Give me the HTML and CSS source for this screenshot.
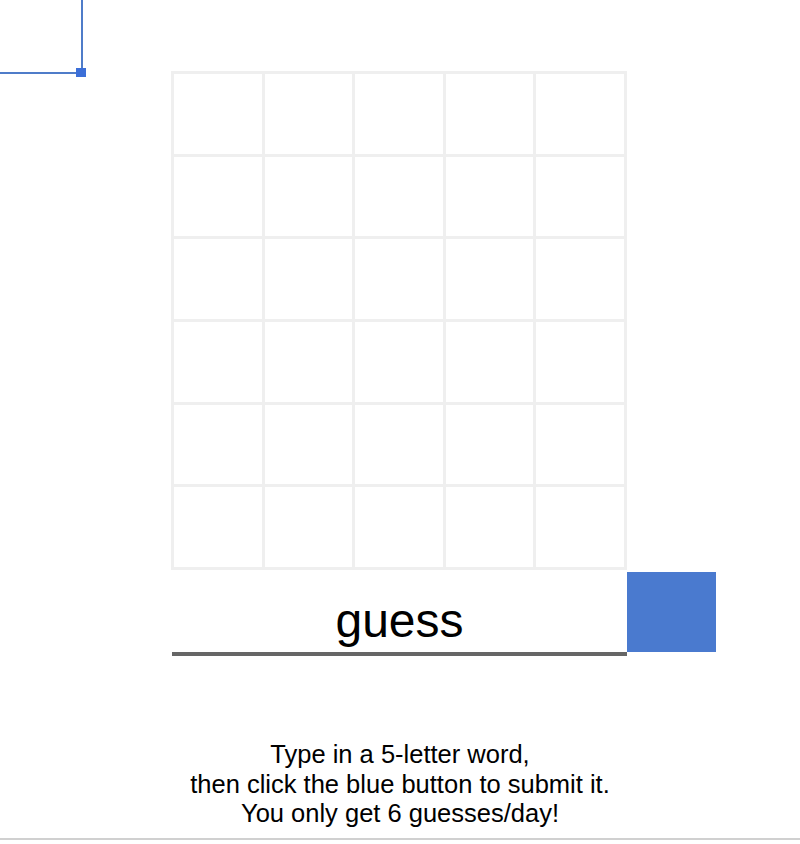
FILE: index.html
```html
<!DOCTYPE html>
<html>
<head>
<meta charset="utf-8">
<link rel="stylesheet" href="styles.css">
</head>
<body>
<div class="handle">
  <div class="handle-v"></div>
  <div class="handle-h"></div>
  <div class="handle-dot"></div>
</div>
<main class="page">
  <div class="game">
    <div class="board">
      <div class="cell"></div><div class="cell"></div><div class="cell"></div><div class="cell"></div><div class="cell"></div>
      <div class="cell"></div><div class="cell"></div><div class="cell"></div><div class="cell"></div><div class="cell"></div>
      <div class="cell"></div><div class="cell"></div><div class="cell"></div><div class="cell"></div><div class="cell"></div>
      <div class="cell"></div><div class="cell"></div><div class="cell"></div><div class="cell"></div><div class="cell"></div>
      <div class="cell"></div><div class="cell"></div><div class="cell"></div><div class="cell"></div><div class="cell"></div>
      <div class="cell"></div><div class="cell"></div><div class="cell"></div><div class="cell"></div><div class="cell"></div>
    </div>
    <div class="entry">
      <div class="guess">guess</div>
      <div class="submit"></div>
    </div>
  </div>
  <p class="help">Type in a 5-letter word,<br>then click the blue button to submit it.<br>You only get 6 guesses/day!</p>
</main>
</body>
</html>
```
FILE: styles.css
```css
html, body {
  margin: 0;
  padding: 0;
  background: #ffffff;
}
body {
  font-family: "Liberation Sans", Arial, Helvetica, sans-serif;
  color: #000;
  width: 800px;
  height: 844px;
  overflow: hidden;
  position: relative;
}
.handle {
  position: absolute;
  left: 0;
  top: 0;
  width: 90px;
  height: 80px;
}
.handle-v {
  position: absolute;
  left: 81px;
  top: 0;
  width: 1.5px;
  height: 72px;
  background: #4f7cc9;
}
.handle-h {
  position: absolute;
  left: 0;
  top: 72px;
  width: 80px;
  height: 1.5px;
  background: #4f7cc9;
}
.handle-dot {
  position: absolute;
  left: 76px;
  top: 68px;
  width: 10px;
  height: 9px;
  background: #3c6fd8;
}
.page {
  display: flex;
  flex-direction: column;
}
.game {
  padding-left: 171px;
  padding-top: 71px;
  display: flex;
  flex-direction: column;
}
.board {
  box-sizing: border-box;
  width: 456px;
  height: 499px;
  padding: 3px;
  display: grid;
  grid-template-columns: repeat(5, 1fr);
  grid-template-rows: repeat(6, 1fr);
  gap: 3px;
  background: #efefef;
}
.cell {
  background: #ffffff;
}
.entry {
  display: flex;
  align-items: flex-start;
}
.guess {
  box-sizing: content-box;
  width: 455px;
  padding: 27px 0 7px 0;
  margin-left: 1px;
  font-size: 48px;
  line-height: 48px;
  text-align: center;
  border-bottom: 4px solid #666666;
}
.submit {
  width: 89px;
  height: 80px;
  margin-top: 2px;
  background: #4a7acf;
}
.help {
  margin: 84px 0 0 0;
  padding-bottom: 9px;
  font-size: 25.5px;
  line-height: 29.5px;
  text-align: center;
  border-bottom: 2px solid #d0d0d0;
}
```
